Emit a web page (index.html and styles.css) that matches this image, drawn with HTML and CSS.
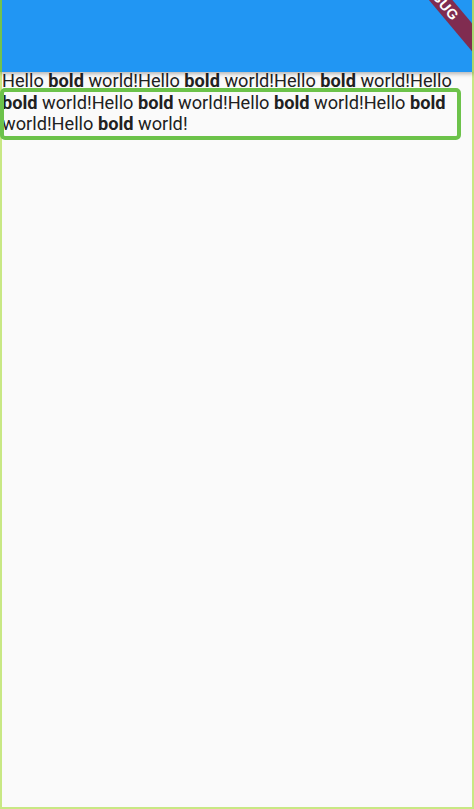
FILE: index.html
```html
<!DOCTYPE html>
<html>
<head>
<meta charset="utf-8">
<link rel="stylesheet" href="styles.css">
</head>
<body>
<div class="screen">
  <header class="appbar">
    <div class="banner">DEBUG</div>
  </header>
  <main class="content">
    <p class="rich">Hello <b>bold</b> world!Hello <b>bold</b> world!Hello <b>bold</b> world!Hello <b>bold</b> world!Hello <b>bold</b> world!Hello <b>bold</b> world!Hello <b>bold</b> world!Hello <b>bold</b> world!</p>
    <div class="highlight"></div>
  </main>
</div>
</body>
</html>
```
FILE: styles.css
```css
html, body {
  margin: 0;
  padding: 0;
  background: #fafafa;
}
.screen {
  box-sizing: border-box;
  width: 474px;
  height: 809px;
  border-left: 2px solid #c8e884;
  border-right: 2px solid #c8e884;
  border-bottom: 2px solid #c8e884;
  background: #fafafa;
  font-family: Roboto, "Noto Sans", sans-serif;
  color: #212121;
  display: flex;
  flex-direction: column;
}
.appbar {
  position: relative;
  height: 72px;
  margin: 0 -2px;
  border-left: 2px solid #72c24c;
  border-right: 2px solid #a8d870;
  background: #2196f3;
  box-shadow: 0 2px 4px rgba(0, 0, 0, 0.28);
  overflow: hidden;
  z-index: 1;
  flex: none;
}
.banner {
  position: absolute;
  left: 357px;
  top: -11px;
  width: 160px;
  height: 18px;
  line-height: 18px;
  background: rgba(145, 26, 50, 0.85);
  color: #fff;
  font-family: "Liberation Sans", Roboto, sans-serif;
  font-weight: bold;
  font-size: 14px;
  letter-spacing: 0.5px;
  text-align: center;
  transform: rotate(50deg);
}
.content {
  position: relative;
  flex: 1;
}
.rich {
  margin: -2px 0 0;
  font-size: 18.2px;
  line-height: 21.7px;
}
.rich b {
  font-weight: 700;
}
.highlight {
  position: absolute;
  left: -2px;
  top: 16px;
  width: 461px;
  height: 52px;
  box-sizing: border-box;
  border: 4px solid #6cc24a;
  border-radius: 5px;
  pointer-events: none;
}
```
